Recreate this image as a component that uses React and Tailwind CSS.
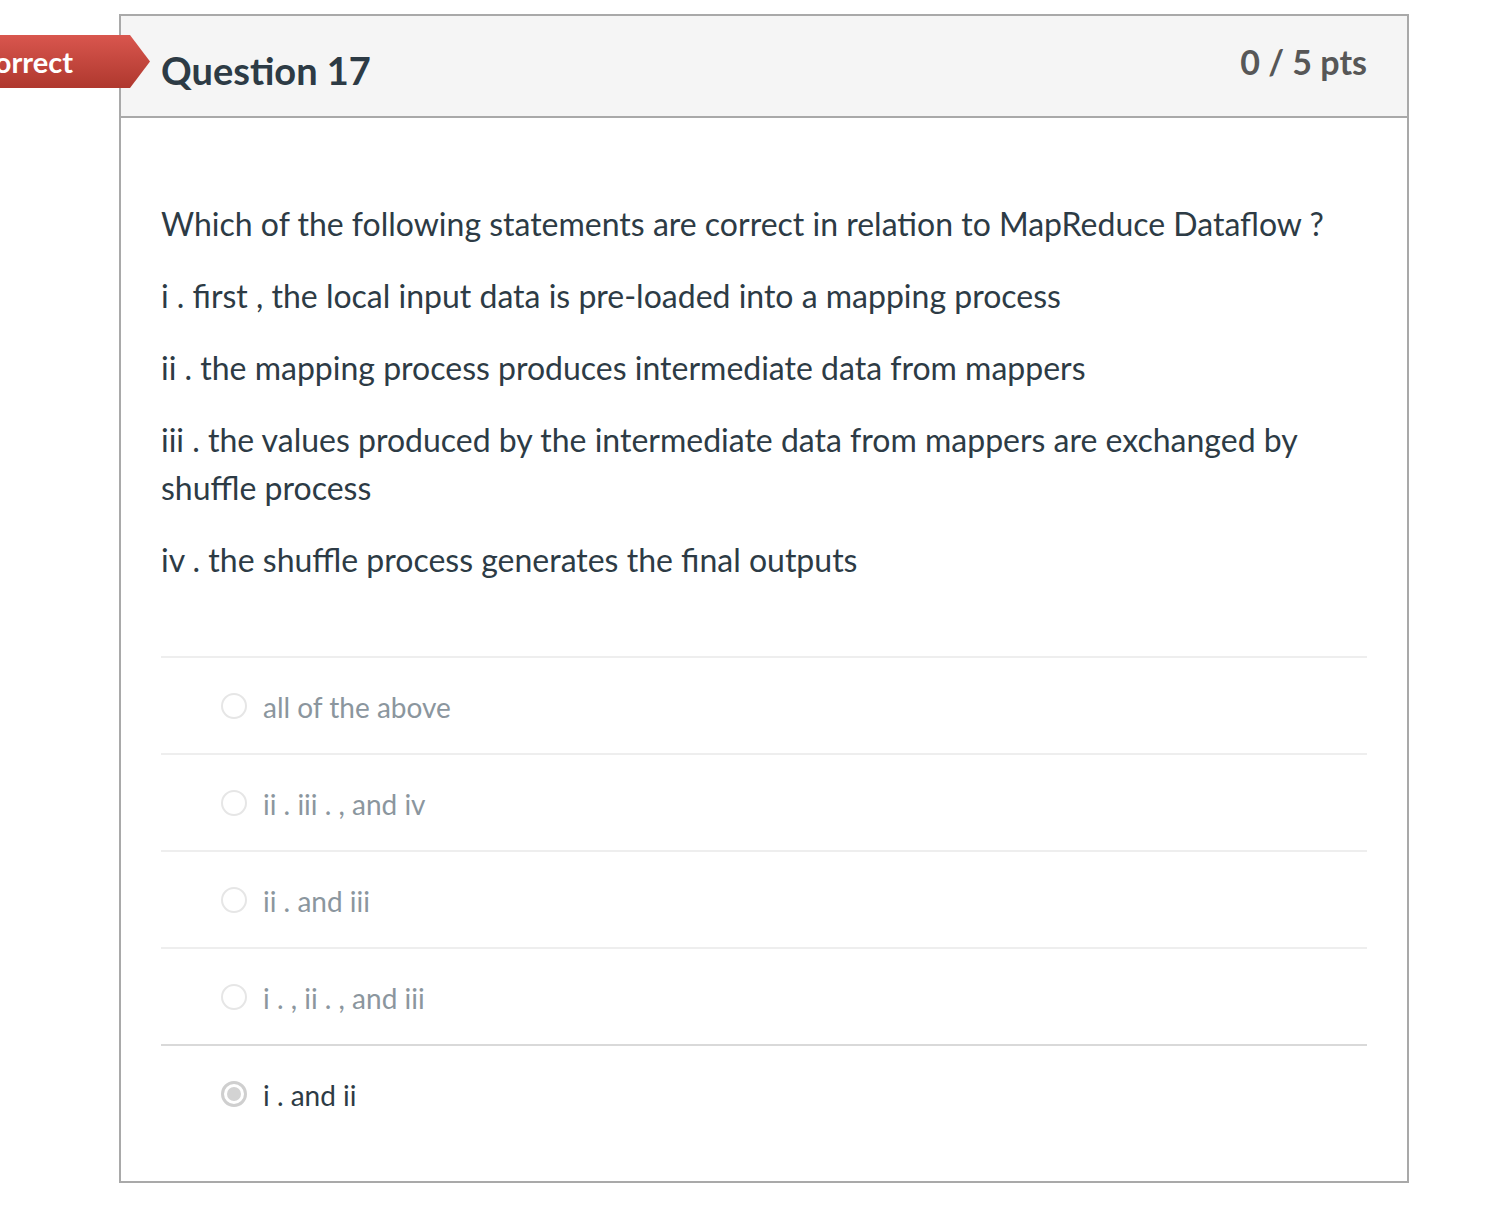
import React from "react";

const options = [
  { text: "all of the above", selected: false },
  { text: "ii . iii . , and iv", selected: false },
  { text: "ii . and iii", selected: false },
  { text: "i . , ii . , and iii", selected: false },
  { text: "i . and ii", selected: true },
];

function Radio({ selected }) {
  if (selected) {
    return (
      <span className="flex h-[26px] w-[26px] shrink-0 items-center justify-center rounded-full border-[3px] border-[#cfcfcf] bg-white">
        <span className="h-[14px] w-[14px] rounded-full bg-[#d3d3d3]" />
      </span>
    );
  }
  return (
    <span className="h-[26px] w-[26px] shrink-0 rounded-full border-2 border-[#e6e6e6] bg-white" />
  );
}

export default function App() {
  return (
    <div className="min-h-[1228px] bg-white pt-[14px] font-['Lato',sans-serif] overflow-hidden">
      <div className="relative ml-[119px] w-[1290px] border-2 border-[#a9a9a9] bg-white">
        <div className="absolute left-[-121px] top-[19px] flex h-[53px] w-[150px] items-center justify-end bg-gradient-to-b from-[#d9564e] to-[#af382e] pr-[77px] [clip-path:polygon(0_0,130px_0,150px_50%,130px_100%,0_100%)]">
          <span className="whitespace-nowrap text-[29px] font-bold leading-none text-white">Incorrect</span>
        </div>
        <div className="flex h-[102px] items-start justify-between border-b-2 border-[#a9a9a9] bg-[#f5f5f5] px-[40px]">
          <h2 className="pt-[32px] text-[38px] font-bold leading-[1.2] text-[#2d3b45]">Question 17</h2>
          <div className="pt-[26px] text-[34px] font-bold leading-[1.2] text-[#575757]">0 / 5 pts</div>
        </div>
        <div className="px-[40px] pb-[40px] pt-[82px]">
          <div className="text-[32px] leading-[48px] text-[#2d3b45]">
            <p className="mb-[24px]">Which of the following statements are correct in relation to MapReduce Dataflow ?</p>
            <p className="mb-[24px]">i . first , the local input data is pre-loaded into a mapping process</p>
            <p className="mb-[24px]">ii . the mapping process produces intermediate data from mappers</p>
            <p className="mb-[24px]">iii . the values produced by the intermediate data from mappers are exchanged by shuffle process</p>
            <p>iv . the shuffle process generates the final outputs</p>
          </div>
          <div className="mt-[72px]">
            {options.map((o, i) => (
              <div
                key={i}
                className={`flex h-[97px] items-center gap-[16px] border-t-2 pl-[60px] ${
                  o.selected ? "border-[#d9d9d9]" : "border-[#eeeeee]"
                }`}
              >
                <Radio selected={o.selected} />
                <span
                  className={`pt-[3px] text-[28px] leading-none ${
                    o.selected ? "text-[#2d3b45]" : "text-[#8b969e]"
                  }`}
                >
                  {o.text}
                </span>
              </div>
            ))}
          </div>
        </div>
      </div>
    </div>
  );
}
